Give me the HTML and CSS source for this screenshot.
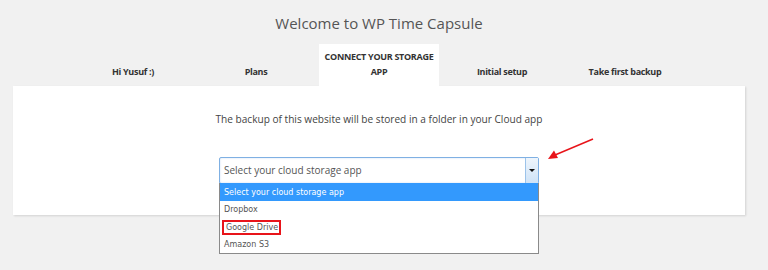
FILE: index.html
```html
<!DOCTYPE html>
<html lang="en">
<head>
    <meta charset="UTF-8">
    <title>WP Time Capsule</title>
    <link rel="stylesheet" href="styles.css">
</head>
<body>
    <div class="wrap">
        <h1 class="title">Welcome to WP Time Capsule</h1>
        <div class="tabs">
            <div class="tab">Hi Yusuf :)</div>
            <div class="tab">Plans</div>
            <div class="tab active">CONNECT YOUR STORAGE APP</div>
            <div class="tab">Initial setup</div>
            <div class="tab">Take first backup</div>
        </div>
        <div class="card">
            <p class="info">The backup of this website will be stored in a folder in your Cloud app</p>
            <div class="picker">
                <div class="select">
                    <span class="current">Select your cloud storage app</span>
                    <span class="btn"><span class="caret"></span></span>
                </div>
                <ul class="list">
                    <li class="opt sel">Select your cloud storage app</li>
                    <li class="opt">Dropbox</li>
                    <li class="opt"><span class="mark">Google Drive</span></li>
                    <li class="opt">Amazon S3</li>
                </ul>
                <svg class="pointer" width="52" height="26" viewBox="0 0 52 26">
                    <line x1="48" y1="2" x2="10" y2="18" stroke="#e8141a" stroke-width="1.6"/>
                    <polygon points="3,22 9,13.5 13,21" fill="#e8141a"/>
                </svg>
            </div>
        </div>
    </div>
</body>
</html>
```

FILE: styles.css
```css
*{
    margin: 0; padding: 0;
    box-sizing: border-box;
}
html, body{
    height: 100%;
}
body{
    background: #f1f1f1;
    font-family: 'Open Sans', sans-serif;
    color: #444;
}
.wrap{
    margin-left: 13px;
    width: 732px;
}
.title{
    padding-top: 13px;
    font-size: 15px;
    font-weight: 400;
    line-height: 20px;
    color: #555;
    text-align: center;
}
.tabs{
    margin-top: 11px;
    display: flex;
    justify-content: center;
    gap: 3px;
}
.tab{
    width: 120px;
    height: 42px;
    display: flex;
    align-items: flex-end;
    justify-content: center;
    padding: 0 4px 7px;
    font-size: 9px;
    font-weight: 700;
    letter-spacing: -0.3px;
    line-height: 15px;
    color: #333;
    text-align: center;
}
.tab.active{
    background: #fff;
}
.card{
    height: 129px;
    background: #fff;
    box-shadow: 1px 1px 2px rgba(0,0,0,0.13);
    padding-top: 25px;
}
.info{
    font-size: 10.1px;
    line-height: 16px;
    text-align: center;
    color: #444;
}
.picker{
    position: relative;
    width: 320px;
    margin: 30px auto 0;
}
.select{
    height: 27px;
    display: flex;
    align-items: stretch;
    border: 1px solid #7fb0e3;
    border-radius: 2px;
    background: #fff;
    box-shadow: inset 0 0 2px rgba(90,150,220,0.35);
}
.current{
    flex: 1;
    padding-left: 4px;
    font-size: 10px;
    line-height: 25px;
    color: #555;
}
.btn{
    width: 13px;
    display: flex;
    align-items: center;
    justify-content: center;
    border-left: 1px solid #9cc3ea;
    background: linear-gradient(#eef5fc, #cfe3f7);
}
.caret{
    width: 0; height: 0;
    border-left: 3px solid transparent;
    border-right: 3px solid transparent;
    border-top: 3px solid #111;
}
.list{
    position: absolute;
    left: 0; top: 26px;
    width: 320px;
    list-style: none;
    background: #fff;
    border: 1px solid #8a8a8a;
    border-top: none;
}
.opt{
    height: 17.5px;
    padding: 1.5px 0 0 4px;
    font-family: 'DejaVu Sans', sans-serif;
    font-size: 8px;
    line-height: 16px;
    color: #555;
}
.opt.sel{
    background: #3399fd;
    color: #fff;
}
.mark{
    display: inline-block;
    margin-left: -2px;
    padding: 0 1px 0 2px;
    border: 2px solid #e8141a;
    line-height: 11px;
}
.pointer{
    position: absolute;
    left: 326px;
    top: -20px;
}
```
